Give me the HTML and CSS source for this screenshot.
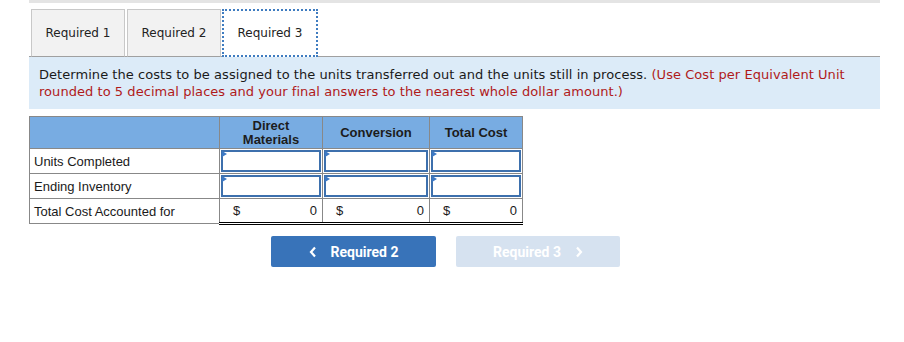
FILE: index.html
```html
<!DOCTYPE html>
<html lang="en">
<head>
    <meta charset="UTF-8">
    <meta name="viewport" content="width=device-width, initial-scale=1.0">
    <title>Required 3</title>
    <link rel="stylesheet" href="styles.css">
</head>
<body>

    <div class="page">
        <!-- Top divider -->
        <div class="topbar"></div>

        <!-- Tabs -->
        <div class="tabs">
            <button class="tab">Required 1</button>
            <button class="tab">Required 2</button>
            <button class="tab active">Required 3</button>
        </div>

        <!-- Instructions -->
        <div class="instructions">
            <p>Determine the costs to be assigned to the units transferred out and the units still in process. <span class="hint">(Use Cost per Equivalent Unit rounded to 5 decimal places and your final answers to the nearest whole dollar amount.)</span></p>
        </div>

        <!-- Answer grid -->
        <table class="grid">
            <thead>
                <tr>
                    <th class="label-col"></th>
                    <th class="dm-col">Direct<br>Materials</th>
                    <th class="conv-col">Conversion</th>
                    <th class="total-col">Total Cost</th>
                </tr>
            </thead>
            <tbody>
                <tr>
                    <td class="label">Units Completed</td>
                    <td class="entry"><input type="text"></td>
                    <td class="entry"><input type="text"></td>
                    <td class="entry"><input type="text"></td>
                </tr>
                <tr>
                    <td class="label">Ending Inventory</td>
                    <td class="entry"><input type="text"></td>
                    <td class="entry"><input type="text"></td>
                    <td class="entry"><input type="text"></td>
                </tr>
                <tr class="total-row">
                    <td class="label">Total Cost Accounted for</td>
                    <td class="sum"><span class="cur">$</span><span class="amt">0</span></td>
                    <td class="sum"><span class="cur">$</span><span class="amt">0</span></td>
                    <td class="sum"><span class="cur">$</span><span class="amt">0</span></td>
                </tr>
            </tbody>
        </table>

        <!-- Navigation buttons -->
        <div class="nav">
            <button class="nav-btn prev">
                <svg width="8" height="12" viewBox="0 0 8 12"><path d="M6 1.5 L2 6 L6 10.5" fill="none" stroke="#fff" stroke-width="2.2"/></svg>
                <span>Required 2</span>
            </button>
            <button class="nav-btn next" disabled>
                <span>Required 3</span>
                <svg width="8" height="12" viewBox="0 0 8 12"><path d="M2 1.5 L6 6 L2 10.5" fill="none" stroke="#fff" stroke-width="2.2"/></svg>
            </button>
        </div>
    </div>

</body>
</html>
```

FILE: styles.css
```css
/* General styling */
body {
    margin: 0;
    background: #fff;
    font-family: "DejaVu Sans", Verdana, sans-serif;
}

.page {
    width: 851px;
    margin-left: 29px;
}

.topbar {
    height: 3px;
    background-color: #e4e4e4;
}

/* Tabs */
.tabs {
    display: flex;
    gap: 2px;
    margin-top: 6px;
    padding-left: 2px;
    border-bottom: 1px solid #a0a0a0;
}

.tab {
    width: 94px;
    height: 48px;
    margin-bottom: -1px;
    border: 1px solid #c8c8c8;
    border-bottom-color: #a0a0a0;
    background-color: #f2f2f2;
    font-family: "DejaVu Sans", Verdana, sans-serif;
    font-size: 12px;
    color: #222;
    padding: 0;
}

.tab.active {
    width: 96px;
    margin-left: -1px;
    background-color: #fff;
    border: 2px dotted #3f7cc0;
}

/* Instructions panel */
.instructions {
    background-color: #dcebf8;
    padding: 9px 10px 9px 10px;
    font-size: 13px;
    line-height: 17px;
    color: #1a1a1a;
}

.instructions p {
    margin: 0;
    letter-spacing: 0.05px;
}

.hint {
    color: #b01a1a;
}

/* Grid */
.grid {
    margin-top: 7px;
    border-collapse: collapse;
    font-family: "Liberation Sans", Arial, sans-serif;
    font-size: 13px;
    color: #1a1a1a;
}

.grid th,
.grid td {
    border: 1px solid #888;
    padding: 0;
}

.grid th {
    background-color: #78ace2;
    height: 31px;
    font-weight: bold;
    line-height: 14px;
    color: #1c1c1c;
}

.label-col { width: 189px; }
.dm-col { width: 102px; }
.conv-col { width: 106px; }
.total-col { width: 92px; }

.grid td {
    height: 24px;
}

.grid td.label {
    padding-left: 4px;
}

.grid td.entry {
    position: relative;
    height: 22px;
    padding: 1px;
}

.grid td.entry input {
    display: block;
    width: 100%;
    height: 22px;
    box-sizing: border-box;
    border: 2px solid #3d70ad;
    margin: 0;
}

/* small corner marker on editable cells */
.grid td.entry::before {
    content: "";
    position: absolute;
    top: 2px;
    left: 2px;
    border-top: 3px solid transparent;
    border-bottom: 3px solid transparent;
    border-left: 5px solid #3d79c4;
}

.total-row td.sum {
    height: 22px;
    border-top: 1px solid #000;
    border-bottom: 3px double #000;
    padding: 0 5px 0 13px;
}

.total-row .cur {
    float: left;
}

.total-row .amt {
    float: right;
}

/* Navigation */
.nav {
    display: flex;
    gap: 20px;
    margin-top: 11px;
    padding-left: 242px;
}

.nav-btn {
    display: flex;
    align-items: center;
    justify-content: center;
    gap: 14px;
    width: 165px;
    height: 31px;
    border: none;
    border-radius: 2px;
    font-family: Roboto, "Liberation Sans", sans-serif;
    font-weight: bold;
    font-size: 14px;
    color: #fff;
}

.nav-btn.prev {
    background-color: #3873b9;
}

.nav-btn.next {
    width: 164px;
    background-color: #d6e2f0;
}
```
